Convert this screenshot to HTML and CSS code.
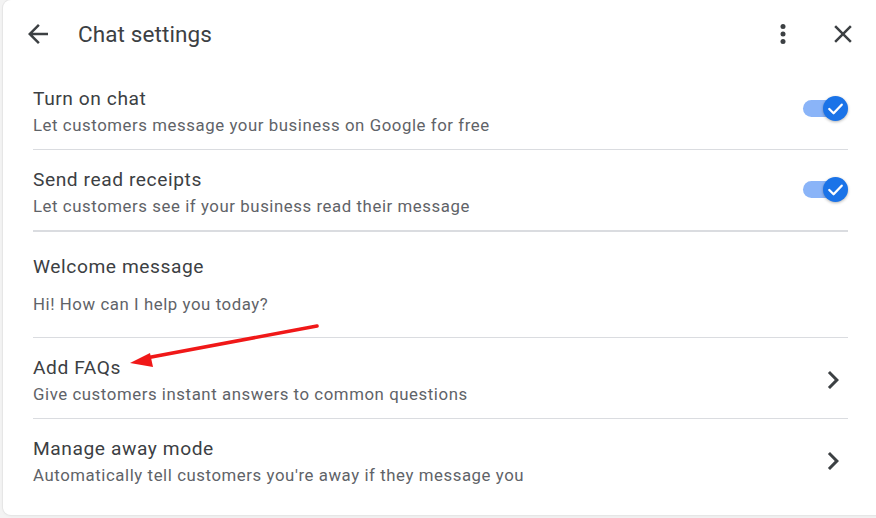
FILE: index.html
```html
<!DOCTYPE html>
<html lang="en">
<head>
<meta charset="utf-8">
<title>Chat settings</title>
<link rel="stylesheet" href="styles.css">
</head>
<body>
<div class="dialog">
  <header class="header">
    <svg class="icon" viewBox="0 0 24 24"><path d="M20 11H7.83l5.59-5.59L12 4l-8 8 8 8 1.41-1.41L7.83 13H20v-2z"/></svg>
    <h1 class="title">Chat settings</h1>
    <div class="header-actions">
      <svg class="icon" viewBox="0 0 24 24"><circle cx="12" cy="6" r="2"/><circle cx="12" cy="12" r="2"/><circle cx="12" cy="18" r="2"/></svg>
      <svg class="icon" viewBox="0 0 24 24"><path d="M19 6.41L17.59 5 12 10.59 6.41 5 5 6.41 10.59 12 5 17.59 6.41 19 12 13.41 17.59 19 19 17.59 13.41 12z"/></svg>
    </div>
  </header>
  <div class="list">
    <div class="row first">
      <div class="text">
        <div class="row-title">Turn on chat</div>
        <div class="row-sub">Let customers message your business on Google for free</div>
      </div>
      <div class="toggle"><span class="thumb"><svg viewBox="0 0 24 24"><path d="M5.5 12.5l4.5 4.5 8.5-9" fill="none" stroke="#fff" stroke-width="2.4" stroke-linecap="round" stroke-linejoin="round"/></svg></span></div>
    </div>
    <div class="row">
      <div class="text">
        <div class="row-title">Send read receipts</div>
        <div class="row-sub">Let customers see if your business read their message</div>
      </div>
      <div class="toggle"><span class="thumb"><svg viewBox="0 0 24 24"><path d="M5.5 12.5l4.5 4.5 8.5-9" fill="none" stroke="#fff" stroke-width="2.4" stroke-linecap="round" stroke-linejoin="round"/></svg></span></div>
    </div>
    <div class="row welcome">
      <div class="text">
        <div class="row-title">Welcome message</div>
        <div class="row-sub message">Hi! How can I help you today?</div>
      </div>
    </div>
    <div class="row">
      <div class="text">
        <div class="row-title">Add FAQs</div>
        <div class="row-sub">Give customers instant answers to common questions</div>
      </div>
      <svg class="chevron" viewBox="0 0 24 24"><path d="M10 6L8.59 7.41 13.17 12l-4.58 4.59L10 18l6-6z"/></svg>
    </div>
    <div class="row">
      <div class="text">
        <div class="row-title">Manage away mode</div>
        <div class="row-sub">Automatically tell customers you're away if they message you</div>
      </div>
      <svg class="chevron" viewBox="0 0 24 24"><path d="M10 6L8.59 7.41 13.17 12l-4.58 4.59L10 18l6-6z"/></svg>
    </div>
  </div>
  <svg class="annotation" viewBox="0 0 876 518" width="876" height="518">
    <line x1="317" y1="326" x2="146" y2="358" stroke="#f01818" stroke-width="3.6" stroke-linecap="round"/>
    <polygon points="130,363 150,353 153,367" fill="#f01818"/>
  </svg>
</div>
</body>
</html>
```

FILE: styles.css
```css
* { box-sizing: border-box; }
html, body { margin: 0; padding: 0; }
body {
  background: #f3f3f3;
  width: 876px;
  height: 518px;
  overflow: hidden;
  font-family: Roboto, "Liberation Sans", sans-serif;
}
.dialog {
  position: relative;
  margin-left: 3px;
  width: 880px;
  height: 515px;
  background: #fff;
  border-radius: 8px;
  box-shadow: 0 0 0 1px #e6e6e6, 0 1px 3px rgba(0,0,0,0.06);
}
.header {
  height: 68px;
  display: flex;
  align-items: center;
  padding-left: 20px;
  padding-right: 25px;
}
.icon {
  width: 30px;
  height: 30px;
  fill: #3c4043;
  flex: none;
}
.title {
  margin: 0 0 0 25px;
  font-weight: 400;
  font-size: 22.5px;
  color: #3c4043;
  letter-spacing: 0.1px;
}
.header-actions {
  margin-left: auto;
  display: flex;
  gap: 30px;
}
.list {
  margin-left: 30px;
  width: 815px;
}
.row {
  display: flex;
  align-items: center;
  border-top: 1px solid #dadce0;
  padding: 16px 0 12px;
  letter-spacing: 0.57px;
}
.row.first { border-top: none; padding-top: 17px; }
.row.welcome { border-top: 2px solid #dadce0; padding-top: 21px; padding-bottom: 21px; }
.text { flex: 1; }
.row-title {
  font-size: 19.2px;
  line-height: 28px;
  color: #3c4043;
}
.row-sub {
  font-size: 16.8px;
  line-height: 24px;
  color: #5f6368;
}
.row-sub.message { margin-top: 11px; }
.toggle {
  position: relative;
  width: 45px;
  height: 17px;
  margin-bottom: 5px;
  flex: none;
}
.toggle::before {
  content: "";
  position: absolute;
  left: 0;
  top: 0;
  width: 37px;
  height: 17px;
  border-radius: 9px;
  background: #8ab4f8;
}
.thumb {
  position: absolute;
  right: 0;
  top: -4px;
  width: 25px;
  height: 25px;
  border-radius: 50%;
  background: #1a73e8;
  box-shadow: 0 1px 3px rgba(0,0,0,0.3);
  display: flex;
  align-items: center;
  justify-content: center;
}
.thumb svg { width: 23px; height: 23px; }
.chevron {
  width: 36px;
  height: 36px;
  fill: #3c4043;
  margin-right: -3px;
  flex: none;
}
.annotation {
  position: absolute;
  left: -3px;
  top: 0;
  pointer-events: none;
}
```
